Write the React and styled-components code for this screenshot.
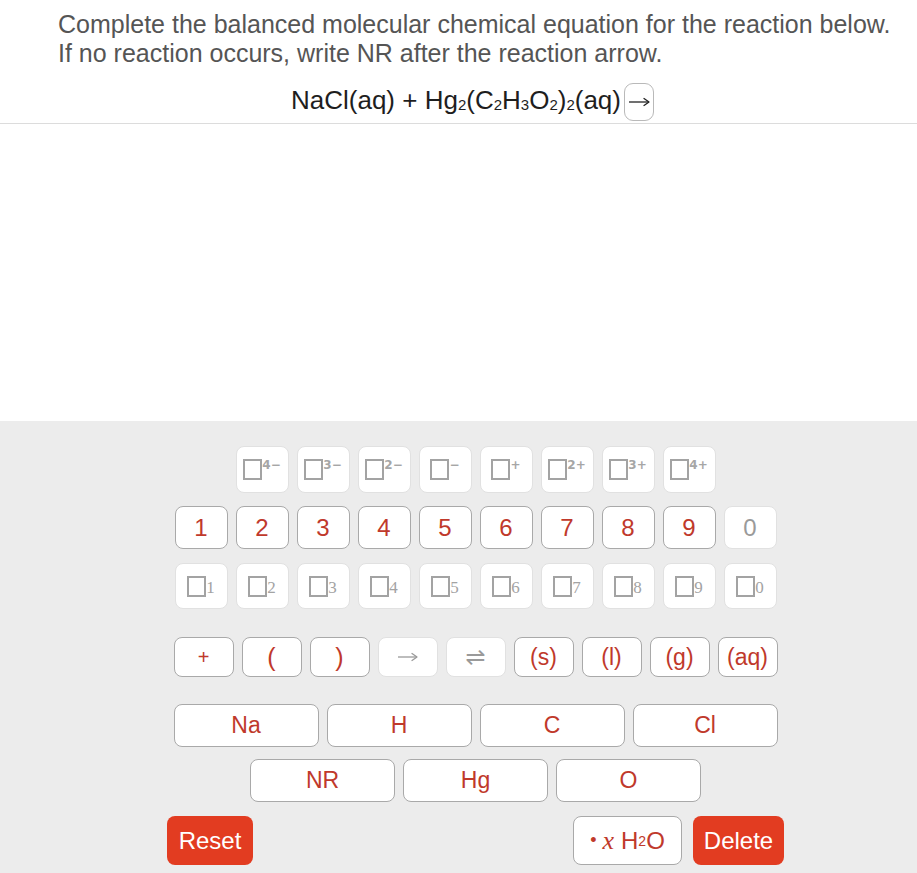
import styled, { createGlobalStyle } from "styled-components"

const Global = createGlobalStyle`
  html, body {
    margin: 0;
    padding: 0;
    background: #ececec;
  }
  body {
    font-family: "Liberation Sans", Arial, sans-serif;
  }
`

const Page = styled.div`
  width: 917px;
  height: 873px;
  display: flex;
  flex-direction: column;
  overflow: hidden;
`

const Top = styled.div`
  background: #fff;
  height: 421px;
  display: flex;
  flex-direction: column;
`

const Question = styled.div`
  border-bottom: 1px solid #dcdcdc;
  padding: 10px 0 0 58px;
  height: 113px;
  box-sizing: content-box;
`

const Prompt = styled.p`
  margin: 0;
  font-size: 25px;
  line-height: 29px;
  color: #555;
  white-space: nowrap;
`

const Equation = styled.div`
  display: flex;
  align-items: center;
  margin: 12px 0 0 233px;
  font-size: 26px;
  color: #1e1e1e;
  gap: 3px;
`

const Sub = styled.sub`
  font-size: 15px;
  vertical-align: -1px;
`

const ArrowSlot = styled.span`
  width: 30px;
  height: 38px;
  border: 1px solid #b9b9b9;
  border-radius: 9px;
  display: flex;
  align-items: center;
  justify-content: center;
  color: #222;
  box-sizing: border-box;
  margin-top: 3px;
`

const Pad = styled.div`
  flex: 1;
  background: #ececec;
  padding: 25px 0 0 167px;
`

const Keys = styled.div`
  width: 617px;
  display: flex;
  flex-direction: column;
`

const Row = styled.div`
  display: flex;
  justify-content: ${(p) => p.$justify || "center"};
  gap: ${(p) => p.$gap || 8}px;
  margin-top: ${(p) => p.$top || 0}px;
`

const Key = styled.button`
  width: ${(p) => p.$w}px;
  height: ${(p) => p.$h}px;
  padding: 0;
  background: #fff;
  border: 1px solid ${(p) => (p.$dim ? "#e1e1e1" : "#a9a9a9")};
  border-radius: 8px;
  color: ${(p) => (p.$dim ? "#9a9a9a" : "#c0392b")};
  font-family: ${(p) => (p.$glyph ? '"DejaVu Sans", sans-serif' : '"Liberation Sans", Arial, sans-serif')};
  font-size: ${(p) => p.$fs || 23}px;
  display: flex;
  align-items: center;
  justify-content: center;
  gap: 3px;
  cursor: pointer;
`

const Box = styled.span`
  display: inline-block;
  width: 15px;
  height: 17px;
  border: 2px solid #a3a3a3;
`

const Sup = styled.span`
  align-self: flex-start;
  margin-top: 11px;
  margin-left: -3px;
  font-size: 12px;
  font-weight: bold;
  color: #a6a6a6;
  font-family: "DejaVu Sans", sans-serif;
`

const SubNum = styled.span`
  align-self: flex-end;
  margin-bottom: 10px;
  margin-left: -3px;
  font-size: 17px;
  color: #a3a3a3;
  font-family: "Liberation Serif", "Times New Roman", serif;
`

const Action = styled.button`
  width: ${(p) => p.$w}px;
  height: 49px;
  border: none;
  border-radius: 8px;
  background: #e23c21;
  color: #fff;
  font-family: "Liberation Sans", Arial, sans-serif;
  font-size: 24px;
  padding: 0;
  cursor: pointer;
`

const Group = styled.div`
  display: flex;
  gap: 11px;
`

const Water = styled(Key)`
  height: 49px;
  gap: 0;
  font-size: 24px;
`

const Dot = styled.span`
  font-size: 18px;
  margin-right: 6px;
`

const Var = styled.span`
  font-family: "Liberation Serif", "Times New Roman", serif;
  font-style: italic;
  font-size: 26px;
  margin-right: 7px;
`

const WaterSub = styled.sub`
  font-size: 14px;
  vertical-align: -2px;
`

const Arrow = ({ w = 22, color = "currentColor" }) => (
  <svg width={w} height="12" viewBox={`0 0 ${w} 12`} fill="none" stroke={color} strokeWidth="1.3">
    <path d={`M1 6H${w - 1}`} />
    <path d={`M${w - 6} 2.5L${w - 1} 6L${w - 6} 9.5`} strokeLinecap="round" strokeLinejoin="round" />
  </svg>
)

const charges = ["4−", "3−", "2−", "−", "+", "2+", "3+", "4+"]
const digits = ["1", "2", "3", "4", "5", "6", "7", "8", "9", "0"]
const symbols = [
  { k: "plus", t: "+", fs: 20 },
  { k: "open", t: "(", fs: 25 },
  { k: "close", t: ")", fs: 25 },
  { k: "arrow", t: <Arrow w={21} />, dim: true },
  { k: "eq", t: "⇌", dim: true, glyph: true, fs: 24 },
  { k: "s", t: "(s)" },
  { k: "l", t: "(l)" },
  { k: "g", t: "(g)" },
  { k: "aq", t: "(aq)" },
]

export default function App() {
  return (
    <Page>
      <Global />
      <Top>
        <Question>
          <Prompt>Complete the balanced molecular chemical equation for the reaction below.</Prompt>
          <Prompt>If no reaction occurs, write NR after the reaction arrow.</Prompt>
          <Equation>
            <span>
              NaCl(aq) + Hg<Sub>2</Sub>(C<Sub>2</Sub>H<Sub>3</Sub>O<Sub>2</Sub>)<Sub>2</Sub>(aq)
            </span>
            <ArrowSlot>
              <Arrow w={22} />
            </ArrowSlot>
          </Equation>
        </Question>
      </Top>
      <Pad>
        <Keys>
          <Row>
            {charges.map((c) => (
              <Key key={c} $w={53} $h={47} $dim>
                <Box />
                <Sup>{c}</Sup>
              </Key>
            ))}
          </Row>
          <Row $top={13}>
            {digits.map((d) => (
              <Key key={d} $w={53} $h={43} $fs={24} $dim={d === "0"}>
                {d}
              </Key>
            ))}
          </Row>
          <Row $top={14}>
            {digits.map((d) => (
              <Key key={d} $w={53} $h={46} $dim>
                <Box />
                <SubNum>{d}</SubNum>
              </Key>
            ))}
          </Row>
          <Row $top={28}>
            {symbols.map((s) => (
              <Key key={s.k} $w={60} $h={40} $fs={s.fs} $dim={s.dim} $glyph={s.glyph}>
                {s.t}
              </Key>
            ))}
          </Row>
          <Row $top={27}>
            {["Na", "H", "C", "Cl"].map((e) => (
              <Key key={e} $w={145} $h={43}>
                {e}
              </Key>
            ))}
          </Row>
          <Row $top={12}>
            {["NR", "Hg", "O"].map((e) => (
              <Key key={e} $w={145} $h={43}>
                {e}
              </Key>
            ))}
          </Row>
          <Row $top={14} $justify="space-between">
            <Action $w={86}>Reset</Action>
            <Group>
              <Water $w={109}>
                <Dot>•</Dot>
                <Var>x</Var>
                H<WaterSub>2</WaterSub>O
              </Water>
              <Action $w={91}>Delete</Action>
            </Group>
          </Row>
        </Keys>
      </Pad>
    </Page>
  )
}
